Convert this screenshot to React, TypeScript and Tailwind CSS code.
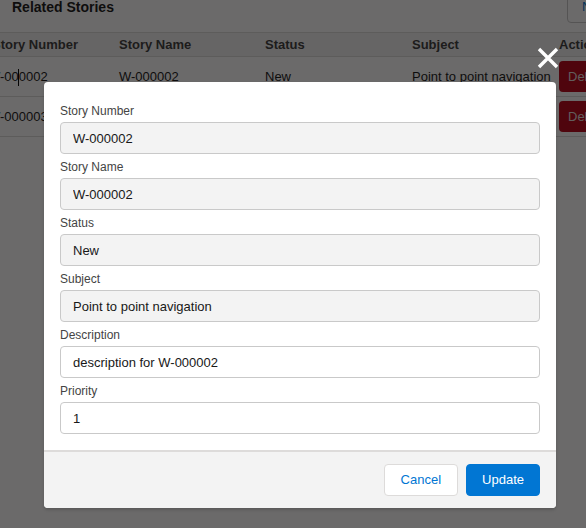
type Story = {
  number: string;
  name: string;
  status: string;
  subject: string;
};

const stories: Story[] = [
  { number: "W-000002", name: "W-000002", status: "New", subject: "Point to point navigation" },
  { number: "W-000003", name: "W-000003", status: "New", subject: "Point to point navigation" },
];

const cols = "grid grid-cols-[131px_146px_147px_147px_80px]";

function Field({
  label,
  value,
  locked,
}: {
  label: string;
  value: string;
  locked?: boolean;
}) {
  return (
    <div>
      <label className="block pt-[4px] mb-[2px] text-[12px] leading-[18px] text-[#444444]">
        {label}
      </label>
      <input
        readOnly
        value={value}
        className={
          "block w-full h-[32px] rounded-[4px] border border-[#c9c9c9] pl-[12px] pr-4 text-[13px] text-[#181818] outline-none " +
          (locked ? "bg-[#f3f3f3]" : "bg-white")
        }
      />
    </div>
  );
}

export default function App() {
  const current = stories[0];

  return (
    <div className="relative w-[586px] h-[528px] overflow-hidden bg-white font-['Liberation_Sans',Arial,sans-serif]">
      {/* page behind the modal */}
      <div className="flex h-[32px] items-start justify-between">
        <h2 className="pl-[12px] -mt-[2px] text-[14px] leading-[18px] font-bold text-[#181818]">
          Related Stories
        </h2>
        <button
          type="button"
          className="-mt-[9px] -mr-[48px] h-[32px] w-[67px] rounded-[4px] border border-[#c9c9c9] bg-white pl-[14px] text-left text-[13px] text-[#0176d3]"
        >
          New
        </button>
      </div>

      <div className="-ml-[20px] w-[660px]">
        <div
          className={`${cols} h-[25px] items-center border-y border-[#dddbda] bg-[#f3f3f3] text-[13px] font-bold text-[#3e3e3c]`}
        >
          <div className="pl-[12px]">Story Number</div>
          <div className="pl-[8px]">Story Name</div>
          <div className="pl-[8px]">Status</div>
          <div className="pl-[8px]">Subject</div>
          <div className="pl-[8px]">Action</div>
        </div>
        {stories.map((s, i) => (
          <div
            key={s.number}
            className={`${cols} h-[40px] items-center border-b border-[#dddbda] text-[13px] text-[#181818]`}
          >
            <div className="pl-[8px] whitespace-nowrap">
              {i === 0 ? (
                <>
                  W-00
                  <span className="inline-block w-px h-[17px] -mx-[0.5px] align-middle bg-black" />
                  0002
                </>
              ) : (
                s.number
              )}
            </div>
            <div className="pl-[8px] whitespace-nowrap">{s.name}</div>
            <div className="pl-[8px]">{s.status}</div>
            <div className="pl-[8px] whitespace-nowrap">{s.subject}</div>
            <div className="pl-[8px]">
              <button
                type="button"
                className="h-[31px] rounded-[4px] bg-[#b80418] px-[9px] text-[13px] text-[#e8dede]"
              >
                Delete
              </button>
            </div>
          </div>
        ))}
      </div>

      {/* backdrop */}
      <div className="absolute inset-0 bg-[rgba(8,7,7,0.6)]" />

      {/* modal */}
      <section className="absolute left-[44px] top-[82px] w-[512px]">
        <button
          type="button"
          title="Close"
          className="absolute -top-[36px] -right-[4px] flex h-[24px] w-[24px] items-center justify-center text-white"
        >
          <svg width="22" height="22" viewBox="0 0 22 22" fill="none">
            <path d="M2 2L20 20M20 2L2 20" stroke="currentColor" strokeWidth="3.4" />
          </svg>
        </button>

        <div className="overflow-hidden rounded-[4px] bg-white shadow-[0_2px_3px_rgba(0,0,0,0.16)]">
          <div className="p-4">
            <Field label="Story Number" value={current.number} locked />
            <Field label="Story Name" value={current.name} locked />
            <Field label="Status" value={current.status} locked />
            <Field label="Subject" value={current.subject} locked />
            <Field label="Description" value={`description for ${current.number}`} />
            <Field label="Priority" value="1" />
          </div>

          <div className="flex justify-end gap-2 border-t-2 border-[#dddbda] bg-[#f3f3f3] px-4 py-3">
            <button
              type="button"
              className="h-[32px] rounded-[4px] border border-[#dddbda] bg-white px-4 text-[13px] text-[#0176d3]"
            >
              Cancel
            </button>
            <button
              type="button"
              className="h-[32px] rounded-[4px] border border-[#0176d3] bg-[#0176d3] px-[15px] text-[13px] text-white"
            >
              Update
            </button>
          </div>
        </div>
      </section>
    </div>
  );
}
